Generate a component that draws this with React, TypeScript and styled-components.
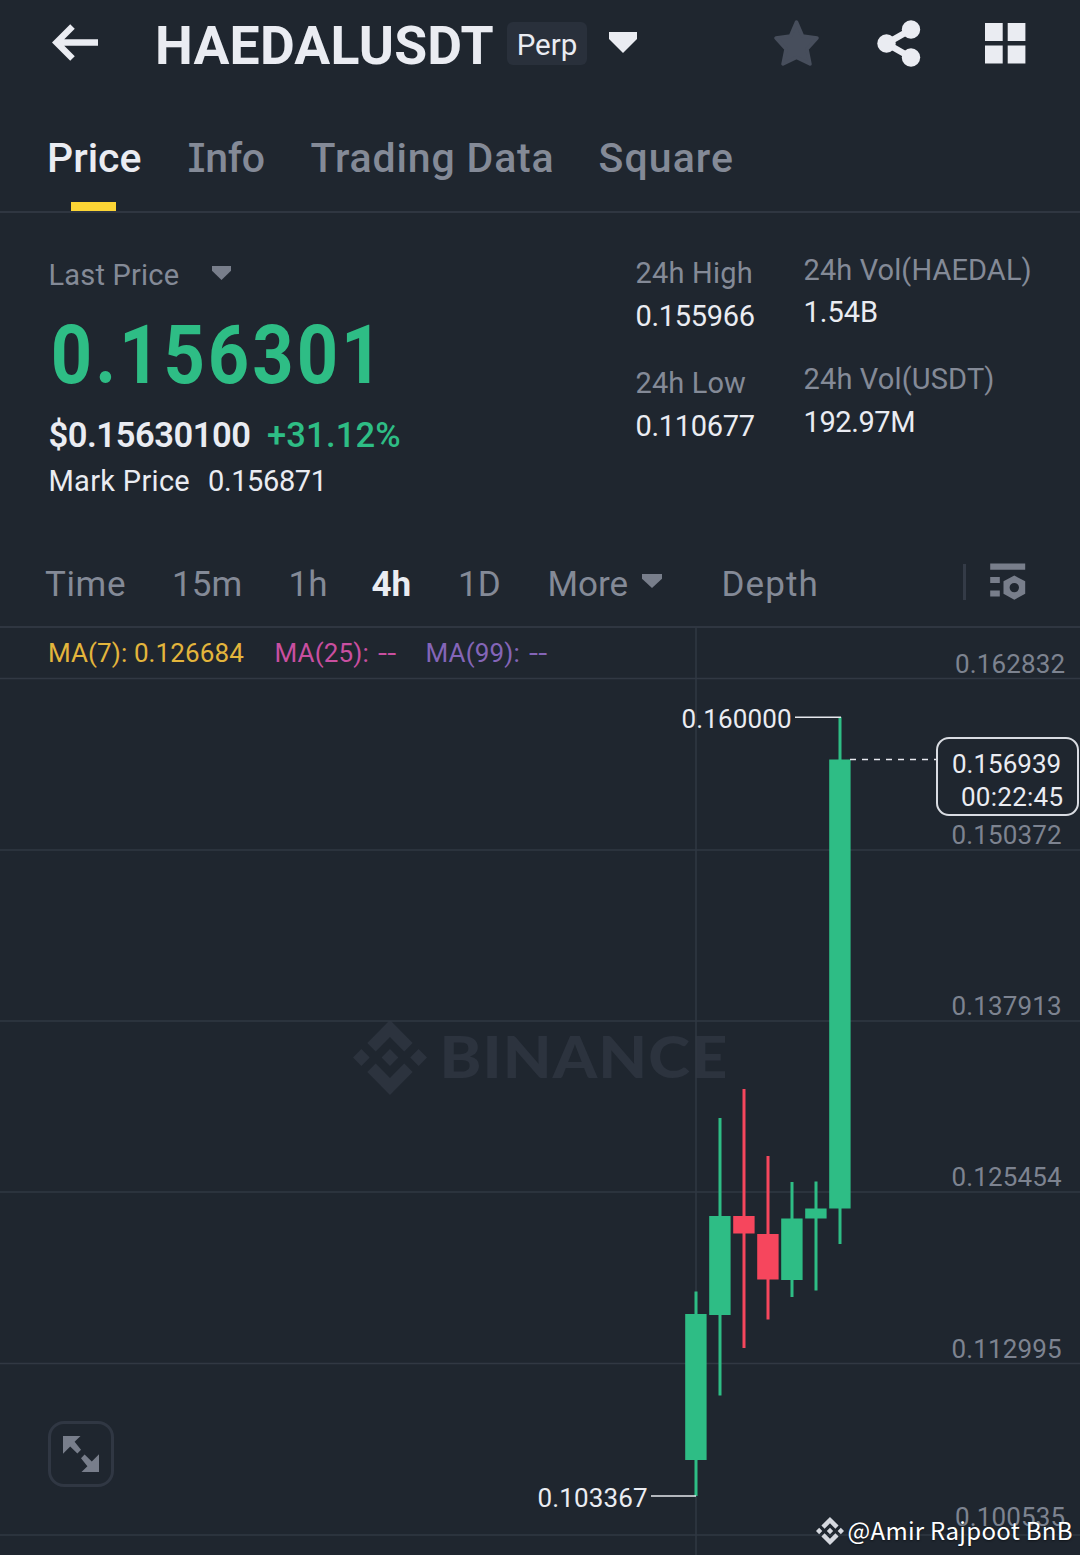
import React from "react";
import styled, { createGlobalStyle } from "styled-components";

const c = {
  bg: "#1f262f",
  text: "#eaecf2",
  muted: "#848a97",
  icon: "#787e8b",
  line: "#2f3641",
  green: "#2ebd85",
  red: "#f6465d",
  yellow: "#fcd535",
};
const sans = `Roboto, "Liberation Sans", sans-serif`;

const GlobalStyle = createGlobalStyle`
  html, body { margin: 0; background: ${c.bg}; }
  *, *::before, *::after { box-sizing: border-box; }
`;

const Screen = styled.main`
  width: 1080px;
  height: 1555px;
  overflow: hidden;
  display: flex;
  flex-direction: column;
  background: ${c.bg};
  color: ${c.text};
  font-family: ${sans};
`;

const Text = styled.span<{ $size: number; $ls?: number; $weight?: number; $color?: string; $lh?: number }>`
  display: block;
  white-space: nowrap;
  font-size: ${(p) => p.$size}px;
  line-height: ${(p) => (p.$lh ? `${p.$lh}px` : "1.2")};
  letter-spacing: ${(p) => p.$ls ?? 0}px;
  font-weight: ${(p) => p.$weight ?? 400};
  color: ${(p) => p.$color ?? c.text};
`;

/* ---------- header ---------- */
const Header = styled.header`
  height: 88px;
  padding: 0 54px 2px 52px;
  display: flex;
  align-items: center;
  svg { display: block; flex: none; }
`;
const Title = styled.h1`
  margin: 0 0 0 57px;
  width: 352px;
  padding-top: 5px;
  font-size: 53.5px;
  line-height: 64px;
  font-weight: 700;
  letter-spacing: 0.2px;
  white-space: nowrap;
`;
const Badge = styled.span`
  width: 80px;
  height: 43px;
  margin-right: 22px;
  border-radius: 6px;
  background: #29303b;
  display: flex;
  align-items: center;
  justify-content: center;
  padding-top: 6px;
`;
const Actions = styled.div`
  margin-left: auto;
  display: flex;
  align-items: center;
  gap: 58px;
  > :last-child { margin-left: 6px; }
`;

/* ---------- tabs ---------- */
const Tabs = styled.nav`
  padding: 46px 0 0 47px;
  height: 125px;
  display: grid;
  grid-template-columns: 140.5px 123px 288px auto;
  justify-content: start;
  border-bottom: 2px solid ${c.line};
`;
const Tab = styled.div<{ $active?: boolean }>`
  display: flex;
  flex-direction: column;
  align-items: flex-start;
  &::after {
    content: "";
    width: 45px;
    height: 9px;
    margin: 19px 0 0 24px;
    background: ${(p) => (p.$active ? c.yellow : "transparent")};
  }
`;
const SerifI = styled.span`
  font-family: Inter, Roboto, sans-serif;
  font-feature-settings: "cv08";
  font-size: 40px;
  line-height: 1;
`;

/* ---------- summary ---------- */
const Summary = styled.section`
  height: 329px;
  display: grid;
  grid-template-columns: 587px 168px auto;
  justify-content: start;
  padding-left: 48.5px;
`;
const Quote = styled.div`
  padding-top: 42px;
  display: flex;
  flex-direction: column;
`;
const Row = styled.div<{ $gap: number; $top?: number }>`
  display: flex;
  align-items: center;
  gap: ${(p) => p.$gap}px;
  margin-top: ${(p) => p.$top ?? 0}px;
`;
const CaretSlot = styled.span<{ $lift: number }>`
  display: block;
  padding-bottom: ${(p) => p.$lift}px;
  svg { display: block; }
`;
const BigPrice = styled.strong`
  display: block;
  margin-top: 11.5px;
  margin-bottom: 1px;
  padding-left: 2px;
  font-size: 82px;
  line-height: 96px;
  font-weight: 700;
  letter-spacing: 3.4px;
  color: ${c.green};
  transform: scaleX(0.88);
  transform-origin: left;
`;
const StatColumn = styled.dl<{ $top: number; $row: number }>`
  margin: 0;
  padding-top: ${(p) => p.$top}px;
  display: flex;
  flex-direction: column;
  gap: 24px;
  dt, dd { margin: 0; height: ${(p) => p.$row}px; display: flex; align-items: center; }
`;

/* ---------- intervals ---------- */
const Intervals = styled.nav`
  height: 86px;
  padding: 2px 54px 0 45px;
  display: grid;
  grid-template-columns: 127px 116.5px 83px 86.5px 89.5px 174px auto 63px;
  align-items: center;
  border-bottom: 2px solid ${c.line};
`;
const Tools = styled.div`
  display: flex;
  align-items: center;
  gap: 24.5px;
  margin-top: -7px;
  &::before {
    content: "";
    width: 2.5px;
    height: 36px;
    background: #343b47;
  }
`;

/* ---------- chart ---------- */
const ChartArea = styled.section`
  position: relative;
  height: 927px;
  > svg { display: block; }
`;
const Legend = styled.div`
  position: absolute;
  top: 8px;
  left: 48px;
  display: grid;
  grid-template-columns: 226.5px 151px auto;
`;
const Dashes = styled.span`
  display: inline-block;
  margin-left: 2px;
  transform: scaleX(1.25);
  transform-origin: left;
`;
const PriceTag = styled.div`
  position: absolute;
  left: 936px;
  top: 108.5px;
  width: 143px;
  height: 79px;
  border: 2px solid #d9dce2;
  border-radius: 13px;
  background: ${c.bg};
  padding: 9px 13px 0 14px;
`;
const Countdown = styled.div`
  padding-left: 9px;
`;
const FullscreenButton = styled.button`
  position: absolute;
  left: 48px;
  top: 793px;
  width: 66px;
  height: 66px;
  padding: 0;
  border: 3px solid #303743;
  border-radius: 16px;
  background: transparent;
  display: grid;
  place-items: center;
`;
const Credit = styled.div`
  position: absolute;
  left: 816px;
  top: 885px;
  display: flex;
  align-items: center;
  gap: 3.5px;
  font-family: "Noto Sans CJK SC", "Noto Sans", sans-serif;
  font-size: 24px;
  line-height: 34px;
  letter-spacing: 0.3px;
  white-space: nowrap;
  color: #fff;
  text-shadow: 0 1px 2px rgba(0, 0, 0, 0.5);
  svg { flex: none; margin-bottom: -1px; }
`;

const LOGO =
  "M16.624 13.9202l2.7175 2.7154-7.353 7.353-7.353-7.352 2.7175-2.7164 4.6355 4.6595 4.6356-4.6595zm4.6366-4.6366L24 12l-2.7154 2.7164L18.5682 12l2.6924-2.7164zm-9.272.001l2.7163 2.6914-2.7164 2.7174v-.001L9.2721 12l2.7164-2.7154zm-9.2722-.001L5.4088 12l-2.6914 2.6924L0 12l2.7164-2.7164zM11.9885.0115l7.353 7.329-2.7174 2.7154-4.6356-4.6356-4.6355 4.6595-2.7174-2.7154 7.353-7.353z";

const Caret = ({ w, h, color }: { w: number; h: number; color: string }) => (
  <svg width={w} height={h} viewBox="0 0 28 21" preserveAspectRatio="none">
    <path d="M0 0H28V7L14 21L0 7Z" fill={color} />
  </svg>
);

const candles = [
  { x: 696, high: 1291.5, low: 1496, top: 1314, bottom: 1460, up: true },
  { x: 720, high: 1118, low: 1395.5, top: 1216, bottom: 1315, up: true },
  { x: 744, high: 1089, low: 1348, top: 1216, bottom: 1233.5, up: false },
  { x: 768, high: 1156, low: 1319.5, top: 1234, bottom: 1279.5, up: false },
  { x: 792, high: 1182, low: 1297, top: 1218.5, bottom: 1280, up: true },
  { x: 816, high: 1181.5, low: 1290.5, top: 1208.5, bottom: 1218.5, up: true },
  { x: 840, high: 717, low: 1244, top: 759.5, bottom: 1208.5, up: true },
];
const gridY = [678.5, 850, 1021, 1192, 1363.5, 1535];
const axis = [
  { x: 955, y: 673, v: "0.162832" },
  { x: 951.5, y: 844, v: "0.150372" },
  { x: 951.5, y: 1015, v: "0.137913" },
  { x: 951.5, y: 1186, v: "0.125454" },
  { x: 951.5, y: 1358, v: "0.112995" },
  { x: 955, y: 1526, v: "0.100535" },
];

const Chart = () => (
  <svg width="1080" height="927" viewBox="0 628 1080 927" fontFamily={sans} fontSize="26">
    <g fill="#2c333e">
      <svg x="353" y="1020" width="74" height="75" viewBox="0 0 24 24" preserveAspectRatio="none">
        <path d={LOGO} />
      </svg>
      <text
        x="439.5"
        y="1078"
        fontFamily="Lato, sans-serif"
        fontWeight="900"
        fontSize="57"
        letterSpacing="1"
        textLength="289"
        lengthAdjust="spacingAndGlyphs"
      >
        BINANCE
      </text>
    </g>
    <g stroke="#313843" strokeWidth="1.5">
      {gridY.map((y) => (
        <line key={y} x1="0" x2="1080" y1={y} y2={y} />
      ))}
      <line x1="696" x2="696" y1="628" y2="1555" />
    </g>
    {candles.map((k) => (
      <g key={k.x} fill={k.up ? c.green : c.red}>
        <rect x={k.x - 1.5} y={k.high} width="3" height={k.low - k.high} />
        <rect x={k.x - 10.8} y={k.top} width="21.4" height={k.bottom - k.top} />
      </g>
    ))}
    <g stroke="#e6e8ee" strokeWidth="1.6">
      <line x1="795" x2="841" y1="717.3" y2="717.3" />
      <line x1="651" x2="696" y1="1496" y2="1496" />
      <line x1="850" x2="937" y1="759.5" y2="759.5" strokeDasharray="6 6" />
    </g>
    <g fill={c.text}>
      <text x="681.5" y="727.5" textLength="110">0.160000</text>
      <text x="537.5" y="1506.5" textLength="110">0.103367</text>
    </g>
    <g fill="#7d8390">
      {axis.map((a) => (
        <text key={a.v} x={a.x} y={a.y} textLength="110">
          {a.v}
        </text>
      ))}
    </g>
  </svg>
);

export default function App() {
  return (
    <Screen>
      <GlobalStyle />
      <Header>
        <svg width="46" height="38" viewBox="0 0 46 38" fill="none" stroke={c.text} strokeWidth="6.4">
          <path d="M20.5 2.5L4.5 18.5L20.5 34.5M4 18.5H46" />
        </svg>
        <Title>HAEDALUSDT</Title>
        <Badge>
          <Text $size={29.5}>Perp</Text>
        </Badge>
        <CaretSlot $lift={1}>
          <Caret w={28} h={21} color={c.text} />
        </CaretSlot>
        <Actions>
          <svg width="45" height="47" viewBox="774.5 20 45 47">
            <path
              d="M797 22L803 36L817.5 38L807.5 49L810.5 64L797 57.5L783.5 64L786.5 49L776.5 38L791 36Z"
              fill="#474e5c"
              stroke="#474e5c"
              strokeWidth="3.5"
              strokeLinejoin="round"
            />
          </svg>
          <svg width="44" height="47" viewBox="877 19.5 44 47">
            <path d="M911 29L886.5 43L911 57" fill="none" stroke={c.text} strokeWidth="6.5" />
            <g fill={c.text}>
              <circle cx="886.5" cy="43" r="9.2" />
              <circle cx="911" cy="29" r="9.2" />
              <circle cx="911" cy="57" r="9.2" />
            </g>
          </svg>
          <svg width="41" height="41" viewBox="0 0 41 41" fill={c.text}>
            <path d="M0 0H17.7V18H0ZM22.7 0H40.4V18H22.7ZM0 22.5H17.7V40.5H0ZM22.7 22.5H40.4V40.5H22.7Z" />
          </svg>
        </Actions>
      </Header>

      <Tabs>
        <Tab $active>
          <Text $size={41} $lh={49} $weight={500}>Price</Text>
        </Tab>
        <Tab>
          <Text $size={41} $lh={49} $weight={500} $color={c.muted} $ls={-0.4}>
            <SerifI>I</SerifI>nfo
          </Text>
        </Tab>
        <Tab>
          <Text $size={41} $lh={49} $weight={500} $color={c.muted} $ls={0.85}>Trading Data</Text>
        </Tab>
        <Tab>
          <Text $size={41} $lh={49} $weight={500} $color={c.muted} $ls={1.1}>Square</Text>
        </Tab>
      </Tabs>

      <Summary>
        <Quote>
          <Row $gap={33}>
            <Text $size={29} $lh={40} $ls={0.2} $color={c.muted}>Last Price</Text>
            <CaretSlot $lift={4}>
              <Caret w={19} h={14} color={c.icon} />
            </CaretSlot>
          </Row>
          <BigPrice>0.156301</BigPrice>
          <Row $gap={16.5} $top={9.5}>
            <Text $size={34.5} $lh={44} $weight={600} $ls={-0.45}>$0.15630100</Text>
            <Text $size={34.5} $lh={44} $weight={500} $ls={0.2} $color={c.green}>+31.12%</Text>
          </Row>
          <Row $gap={18} $top={4}>
            <Text $size={29} $lh={40} $ls={0.3}>Mark Price</Text>
            <Text $size={29} $lh={40} $ls={-0.4}>0.156871</Text>
          </Row>
        </Quote>
        <StatColumn $top={38.5} $row={43}>
          <div>
            <dt><Text $size={29} $ls={0.2} $color={c.muted}>24h High</Text></dt>
            <dd><Text $size={29} $ls={-0.3}>0.155966</Text></dd>
          </div>
          <div>
            <dt><Text $size={29} $ls={0.1} $color={c.muted}>24h Low</Text></dt>
            <dd><Text $size={29} $ls={-0.3}>0.110677</Text></dd>
          </div>
        </StatColumn>
        <StatColumn $top={36} $row={42.6}>
          <div>
            <dt><Text $size={29} $ls={0.1} $color={c.muted}>24h Vol(HAEDAL)</Text></dt>
            <dd><Text $size={29} $ls={0}>1.54B</Text></dd>
          </div>
          <div>
            <dt><Text $size={29} $ls={0.15} $color={c.muted}>24h Vol(USDT)</Text></dt>
            <dd><Text $size={29} $ls={-0.4}>192.97M</Text></dd>
          </div>
        </StatColumn>
      </Summary>

      <Intervals>
        <Text $size={35} $color={c.muted} $ls={0.6}>Time</Text>
        <Text $size={35} $color={c.muted} $ls={0.1}>15m</Text>
        <Text $size={35} $color={c.muted}>1h</Text>
        <Text $size={35} $weight={700}>4h</Text>
        <Text $size={35} $color={c.muted}>1D</Text>
        <Row $gap={13.5}>
          <Text $size={35} $color={c.muted}>More</Text>
          <CaretSlot $lift={8}>
            <Caret w={20} h={14} color={c.icon} />
          </CaretSlot>
        </Row>
        <Text $size={35} $color={c.muted} $ls={1.1}>Depth</Text>
        <Tools>
          <svg width="36" height="37" viewBox="990.5 563.5 36 37" fill={c.icon}>
            <path d="M990.7 564H1025.7V570.3H990.7ZM990.7 577.5H1000.3V583.5H990.7ZM990.7 591H1000.3V597H990.7Z" />
            <path
              fillRule="evenodd"
              d="M1014.8 576L1025.7 581.8V594.2L1014.8 600.2L1004 594.2V581.8ZM1014.8 583.4a4.7 4.7 0 1 0 0 9.4a4.7 4.7 0 1 0 0-9.4Z"
            />
          </svg>
        </Tools>
      </Intervals>

      <ChartArea>
        <Chart />
        <Legend>
          <Text $size={26} $lh={34} $ls={0.1} $color="#e3b53c">MA(7): 0.126684</Text>
          <Text $size={26} $lh={34} $ls={0.15} $color="#c94fa0">MA(25): <Dashes>--</Dashes></Text>
          <Text $size={26} $lh={34} $ls={0.15} $color="#8465b8">MA(99): <Dashes>--</Dashes></Text>
        </Legend>
        <PriceTag>
          <Text $size={26} $lh={33}>0.156939</Text>
          <Countdown>
            <Text $size={26} $lh={33} $ls={0.25}>00:22:45</Text>
          </Countdown>
        </PriceTag>
        <FullscreenButton aria-label="Fullscreen">
          <svg width="38" height="38" viewBox="62 1435 38 38" fill={c.icon}>
            <path d="M63 1436H80.5L74.6 1441.8L81 1449.8L77.4 1453.5L70.2 1446.6L63 1453.7Z" />
            <path d="M99 1472H81.5L87.4 1466.2L81 1458.2L84.6 1454.5L91.8 1461.4L99 1454.3Z" />
          </svg>
        </FullscreenButton>
        <Credit>
          <svg width="28" height="28" viewBox="0 0 24 24" fill="#d5d8df">
            <path d={LOGO} />
          </svg>
          @Amir Rajpoot BnB
        </Credit>
      </ChartArea>
    </Screen>
  );
}
